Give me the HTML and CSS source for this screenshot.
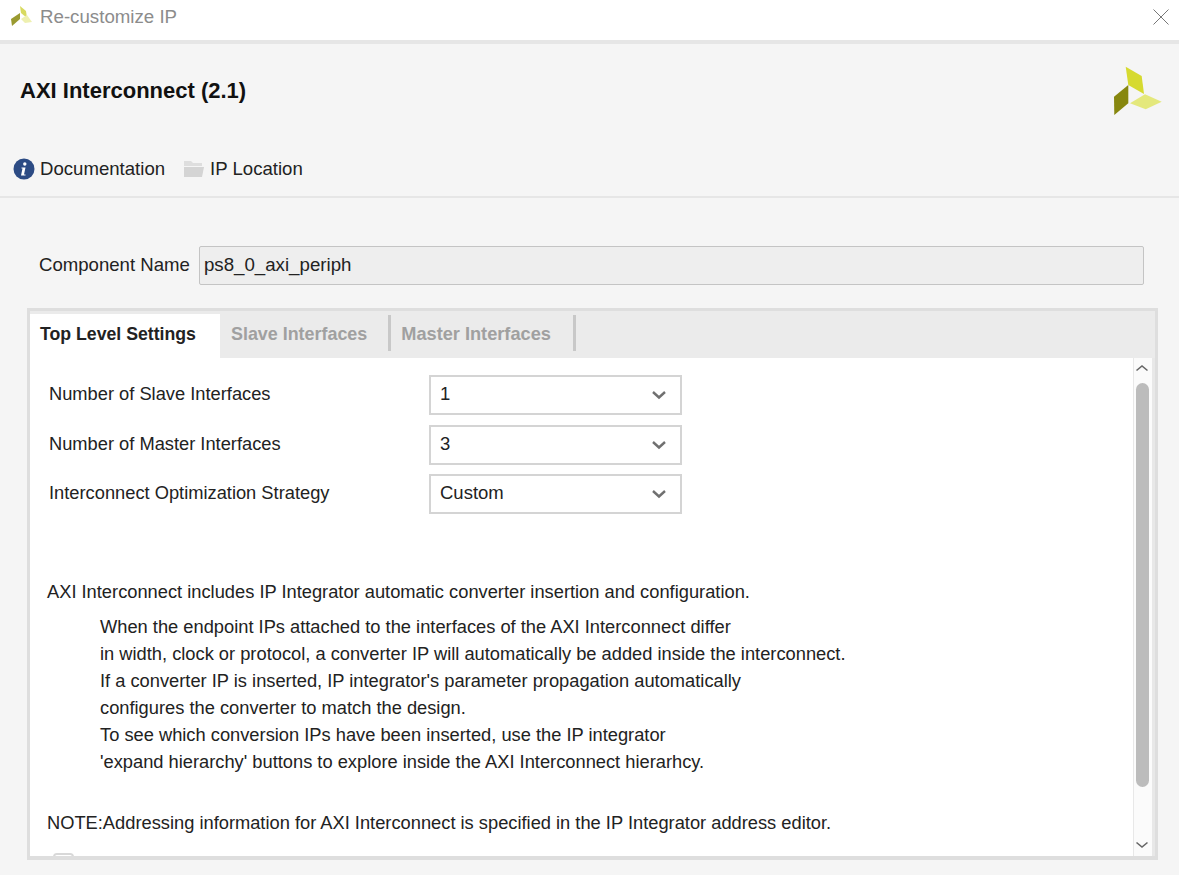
FILE: index.html
```html
<!DOCTYPE html>
<html lang="en">
<head>
<meta charset="utf-8">
<title>Re-customize IP</title>
<link rel="stylesheet" href="styles.css">
</head>
<body>
<div class="dialog">
  <header class="titlebar">
    <svg class="title-logo" viewBox="0 0 24 24" width="24" height="24">
      <polygon points="10,2 16,7 17,14 11,9" fill="#d8da60"/>
      <polygon points="11,15 17,11 22,18 15,19" fill="#eef0b0"/>
      <polygon points="10,9 10,15 2,22 1,15" fill="#9a9a30"/>
    </svg>
    <span class="title-text">Re-customize IP</span>
    <svg class="close" viewBox="0 0 16 16" width="16" height="16">
      <path d="M0.500 0.500L15.500 15.500M15.500 0.500L0.500 15.500" stroke="#777" stroke-width="1" fill="none"/>
    </svg>
  </header>
  <section class="head">
    <h1 class="ip-name">AXI Interconnect (2.1)</h1>
    <svg class="big-logo" viewBox="0 0 49 50" width="49" height="50">
      <polygon points="12.700,0.700 28.700,10 31,28 15.300,19" fill="#d6da30"/>
      <polygon points="17,37.300 32,28.300 48.700,35.700 32.700,43.300" fill="#e4e87c"/>
      <polygon points="15.300,19 15.300,37.300 1.300,49 1,30.700" fill="#87870f"/>
    </svg>
  </section>
  <nav class="links">
    <a class="link">
      <svg viewBox="0 0 22 22" width="22" height="22">
        <circle cx="11" cy="11" r="10.500" fill="#2c4b84"/>
        <circle cx="11.800" cy="6" r="1.700" fill="#fff"/>
        <path d="M8.500 9.500h4l-1.500 7h1.500v1h-4.500l1.500-7h-1z" fill="#fff"/>
      </svg>
      <span>Documentation</span>
    </a>
    <a class="link">
      <svg viewBox="0 0 22 20" width="22" height="20">
        <path d="M1 2h7l2 2h9v3H1z" fill="#dedede"/>
        <path d="M1 8h20l-2 10H1z" fill="#d4d4d4"/>
      </svg>
      <span>IP Location</span>
    </a>
  </nav>
  <main class="body">
    <div class="name-row">
      <label class="name-label">Component Name</label>
      <div class="name-input">ps8_0_axi_periph</div>
    </div>
    <div class="panel">
      <div class="tabs">
        <div class="tab active">Top Level Settings</div>
        <div class="tab">Slave Interfaces</div>
        <div class="tab last">Master Interfaces</div>
      </div>
      <div class="pane">
        <div class="content">
          <div class="field">
            <span class="field-label">Number of Slave Interfaces</span>
            <div class="select"><span>1</span><svg viewBox="0 0 16 10" width="16" height="10"><path d="M2 2l6 5.500 6-5.500" fill="none" stroke="#707070" stroke-width="2.400"/></svg></div>
          </div>
          <div class="field">
            <span class="field-label">Number of Master Interfaces</span>
            <div class="select"><span>3</span><svg viewBox="0 0 16 10" width="16" height="10"><path d="M2 2l6 5.500 6-5.500" fill="none" stroke="#707070" stroke-width="2.400"/></svg></div>
          </div>
          <div class="field">
            <span class="field-label">Interconnect Optimization Strategy</span>
            <div class="select"><span>Custom</span><svg viewBox="0 0 16 10" width="16" height="10"><path d="M2 2l6 5.500 6-5.500" fill="none" stroke="#707070" stroke-width="2.400"/></svg></div>
          </div>
          <p class="intro">AXI Interconnect includes IP Integrator automatic converter insertion and configuration.</p>
          <ul class="details">
            <li>When the endpoint IPs attached to the interfaces of the AXI Interconnect differ</li>
            <li>in width, clock or protocol, a converter IP will automatically be added inside the interconnect.</li>
            <li>If a converter IP is inserted, IP integrator's parameter propagation automatically</li>
            <li>configures the converter to match the design.</li>
            <li>To see which conversion IPs have been inserted, use the IP integrator</li>
            <li>'expand hierarchy' buttons to explore inside the AXI Interconnect hierarhcy.</li>
          </ul>
          <p class="note">NOTE:Addressing information for AXI Interconnect is specified in the IP Integrator address editor.</p>
          <div class="checkbox"></div>
        </div>
        <div class="scrollbar">
          <svg viewBox="0 0 14 8" width="14" height="8"><path d="M1.500 6.500L7 2l5.500 4.500" fill="none" stroke="#666" stroke-width="1.600"/></svg>
          <div class="thumb"></div>
          <svg viewBox="0 0 14 8" width="14" height="8"><path d="M1.500 1.500L7 6l5.500-4.500" fill="none" stroke="#666" stroke-width="1.600"/></svg>
        </div>
      </div>
    </div>
  </main>
</div>
</body>
</html>
```

FILE: styles.css
```css
* { box-sizing: border-box; }
html, body { margin: 0; padding: 0; height: 100%; }
body {
  font-family: "Liberation Sans", Arial, sans-serif;
  font-size: 18px;
  color: #222;
  background: #f5f5f5;
  overflow: hidden;
}
.dialog { width: 1179px; height: 875px; display: flex; flex-direction: column; }
.titlebar {
  height: 44px;
  flex: none;
  background: #fff;
  border-bottom: 4px solid #e6e6e6;
  display: flex;
  align-items: center;
  padding: 0 10px;
}
.title-logo { flex: none; margin-right: 6px; margin-top: -8px; }
.title-text { font-size: 18.700px; color: #8c8c8c; margin-top: -6px; }
.close { margin-left: auto; margin-top: -7px; }
.head {
  height: 92px;
  flex: none;
  display: flex;
  justify-content: space-between;
  padding: 22px 17px 0 20px;
}
.ip-name { margin: 0; font-size: 22px; font-weight: bold; line-height: 50px; color: #111; height: 50px; }
.big-logo { flex: none; }
.links {
  height: 62px;
  flex: none;
  display: flex;
  gap: 18px;
  padding: 22px 0 0 13px;
  border-bottom: 2px solid #e6e6e6;
  align-items: flex-start;
}
.link { display: flex; align-items: center; gap: 5px; height: 22px; font-size: 18.600px; color: #222; }
.body { flex: 1; padding: 48px 21px 0 27px; min-height: 0; }
.name-row { display: flex; align-items: center; gap: 9px; height: 39px; padding-left: 12px; margin-right: 14px; }
.name-label { font-size: 18.600px; flex: none; margin-top: -2px; }
.name-input {
  flex: 1;
  height: 39px;
  background: #eeeeee;
  border: 1px solid #c4c4c4;
  border-radius: 2px;
  line-height: 35px;
  padding-left: 4px;
  font-size: 18.700px;
}
.panel {
  margin-top: 23px;
  height: 552px;
  border: 3px solid #dedede;
  border-bottom-width: 4px;
  background: #e8e8e8;
  display: flex;
  flex-direction: column;
}
.tabs { height: 47px; flex: none; background: #ebebeb; display: flex; padding-top: 1px; }
.tab {
  font-size: 17.900px;
  font-weight: bold;
  color: #a0a0a0;
  height: 36px;
  line-height: 38px;
  padding: 0 21px 0 11px;
  border-right: 3px solid #c8c8c8;
  margin-top: 3px;
}
.tab.last { font-size: 18.200px; padding: 0 22px 0 10px; }
.tab.active {
  background: #fff;
  color: #222;
  border-right: 0;
  height: 44px;
  width: 190px;
  margin-top: 2px;
  padding-left: 10px;
  line-height: 40px;
  font-size: 17.700px;
}
.pane { flex: 1; min-height: 0; display: flex; background: #fff; margin-right: 3px; }
.content { flex: 1; min-width: 0; padding: 17px 0 0 17px; overflow: hidden; }
.field { display: flex; align-items: center; height: 40px; margin-bottom: 9.500px; }
.field-label { width: 382px; flex: none; padding-left: 2px; font-size: 18.300px; margin-top: -2px; }
.select {
  width: 253px;
  height: 40px;
  border: 2px solid #d4d4d4;
  display: flex;
  justify-content: space-between;
  align-items: center;
  padding: 0 13px 0 9px;
  font-size: 18.500px;
}
.select span { margin-top: -2px; }
.intro { margin: 64px 0 0 0; font-size: 18.300px; line-height: 27px; }
.details { list-style: none; margin: 8px 0 0 53px; padding: 0; font-size: 18.300px; line-height: 27px; }
.note { margin: 34px 0 0 0; font-size: 18.300px; line-height: 27px; }
.checkbox { width: 21px; height: 21px; border: 2px solid #d8d8d8; border-radius: 4px; margin: 17px 0 0 6px; }
.scrollbar {
  width: 19px;
  flex: none;
  background: #fbfbfb;
  border-left: 1px solid #e8e8e8;
  display: flex;
  flex-direction: column;
  align-items: center;
  padding: 6px 2px 7px 0;
}
.thumb { width: 13px; height: 404px; background: #bcbcbc; border-radius: 6.500px; margin: 11px 0 0; }
.scrollbar svg:last-child { margin-top: auto; }
```
